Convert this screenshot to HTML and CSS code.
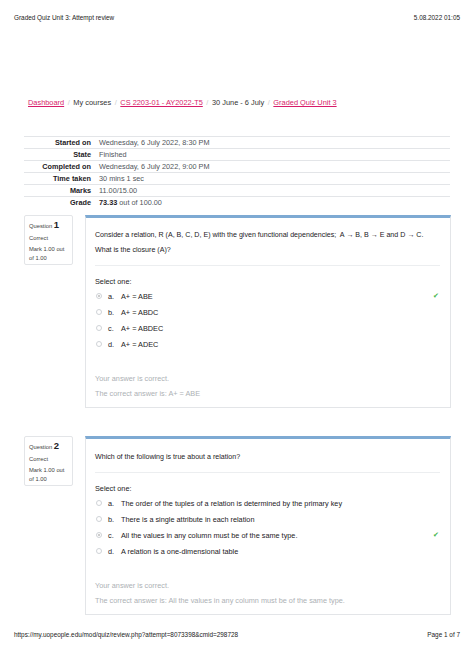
FILE: index.html
```html
<!DOCTYPE html>
<html lang="en">
<head>
    <meta charset="UTF-8">
    <meta name="viewport" content="width=device-width, initial-scale=1.0">
    <title>Graded Quiz Unit 3: Attempt review</title>
    <link rel="stylesheet" href="styles.css">
</head>
<body>
    <div class="print-head">
        <span>Graded Quiz Unit 3: Attempt review</span>
        <span>5.08.2022 01:05</span>
    </div>

    <nav class="crumbs">
        <a href="#">Dashboard</a>
        <span class="sep">/</span>
        <span>My courses</span>
        <span class="sep">/</span>
        <a href="#">CS 2203-01 - AY2022-T5</a>
        <span class="sep">/</span>
        <span>30 June - 6 July</span>
        <span class="sep">/</span>
        <a href="#">Graded Quiz Unit 3</a>
    </nav>

    <div class="summary">
        <div class="row"><div class="k">Started on</div><div class="v">Wednesday, 6 July 2022, 8:30 PM</div></div>
        <div class="row"><div class="k">State</div><div class="v">Finished</div></div>
        <div class="row"><div class="k">Completed on</div><div class="v">Wednesday, 6 July 2022, 9:00 PM</div></div>
        <div class="row"><div class="k">Time taken</div><div class="v">30 mins 1 sec</div></div>
        <div class="row"><div class="k">Marks</div><div class="v">11.00/15.00</div></div>
        <div class="row"><div class="k">Grade</div><div class="v"><b>73.33</b> out of 100.00</div></div>
    </div>

    <!-- question 1 -->
    <div class="que q1">
        <div class="info">
            <div class="qno">Question <b>1</b></div>
            <div class="state">Correct</div>
            <div class="grade">Mark 1.00 out of 1.00</div>
        </div>
        <div class="content">
            <div class="qtext">
                <p>Consider a relation, R (A, B, C, D, E) with the given functional dependencies;&nbsp; A → B, B → E and D → C.</p>
                <p>What is the closure (A)?</p>
            </div>
            <div class="ablock">
                <div class="prompt">Select one:</div>
                <div class="opt"><span class="radio on"></span><span class="let">a.</span><span class="txt">A+ = ABE</span><span class="tick">✔</span></div>
                <div class="opt"><span class="radio"></span><span class="let">b.</span><span class="txt">A+ = ABDC</span></div>
                <div class="opt"><span class="radio"></span><span class="let">c.</span><span class="txt">A+ = ABDEC</span></div>
                <div class="opt"><span class="radio"></span><span class="let">d.</span><span class="txt">A+ = ADEC</span></div>
            </div>
            <div class="outcome">
                <div>Your answer is correct.</div>
                <div>The correct answer is: A+ = ABE</div>
            </div>
        </div>
    </div>

    <!-- question 2 -->
    <div class="que q2">
        <div class="info">
            <div class="qno">Question <b>2</b></div>
            <div class="state">Correct</div>
            <div class="grade">Mark 1.00 out of 1.00</div>
        </div>
        <div class="content">
            <div class="qtext">
                <p>Which of the following is true about a relation?</p>
            </div>
            <div class="ablock">
                <div class="prompt">Select one:</div>
                <div class="opt"><span class="radio"></span><span class="let">a.</span><span class="txt">The order of the tuples of a relation is determined by the primary key</span></div>
                <div class="opt"><span class="radio"></span><span class="let">b.</span><span class="txt">There is a single attribute in each relation</span></div>
                <div class="opt"><span class="radio on"></span><span class="let">c.</span><span class="txt">All the values in any column must be of the same type.</span><span class="tick">✔</span></div>
                <div class="opt"><span class="radio"></span><span class="let">d.</span><span class="txt">A relation is a one-dimensional table</span></div>
            </div>
            <div class="outcome">
                <div>Your answer is correct.</div>
                <div>The correct answer is: All the values in any column must be of the same type.</div>
            </div>
        </div>
    </div>

    <div class="print-foot">
        <span>https://my.uopeople.edu/mod/quiz/review.php?attempt=8073398&amp;cmid=298728</span>
        <span>Page 1 of 7</span>
    </div>
</body>
</html>
```

FILE: styles.css
```css
:root {
    --text: #1d2125;
    --muted: #51565b;
    --line: #e3e5e8;
    --pink: #d81b6a;
    --blue: #7eaad3;
    --green: #43b649;
}

* {
    box-sizing: border-box;
    margin: 0;
    padding: 0;
}

body {
    width: 474px;
    height: 670px;
    padding: 0 14px;
    background: #fff;
    color: var(--text);
    font-family: "Liberation Sans", Arial, sans-serif;
    font-size: 7.3px;
}

.print-head,
.print-foot {
    display: flex;
    justify-content: space-between;
    align-items: center;
    color: #222;
}

.print-head {
    height: 34px;
    font-size: 6.4px;
}

.print-foot {
    margin-top: 13px;
    height: 12px;
    font-size: 6.4px;
}

/* breadcrumb */
.crumbs {
    margin-top: 63px;
    padding-left: 14px;
    height: 12px;
    line-height: 12px;
    font-size: 7.4px;
    color: #333;
}

.crumbs a {
    color: var(--pink);
    text-decoration: underline;
}

.crumbs .sep {
    color: #ccc;
    margin: 0 1.5px;
}

/* attempt summary */
.summary {
    margin: 27px 10px 0 10px;
}

.summary .row {
    display: flex;
    align-items: center;
    height: 12px;
    border-top: 1px solid var(--line);
}

.summary .k {
    width: 67px;
    text-align: right;
    font-weight: bold;
    color: var(--text);
}

.summary .v {
    padding-left: 8px;
    color: var(--muted);
}

.summary .v b {
    color: var(--text);
}

/* question */
.que {
    display: flex;
    gap: 12px;
    margin-left: 10px;
}

.q1 {
    margin-top: 7px;
}

.q2 {
    margin-top: 28px;
}

.info {
    width: 49px;
    height: 50px;
    flex: none;
    padding: 3px 4px;
    border: 1px solid var(--line);
    border-radius: 2px;
    font-size: 5.8px;
    color: #444;
    line-height: 9px;
}

.info .qno {
    line-height: 11px;
    margin-bottom: 2px;
}

.info .qno b {
    font-size: 9.5px;
    color: var(--text);
}

.info .state {
    margin-bottom: 2px;
}

.content {
    width: 366px;
    border: 1px solid var(--line);
    border-top: 3px solid var(--blue);
    padding: 10px 10px 6px 9px;
}

.q2 .content {
    padding-top: 11px;
}

.qtext {
    font-size: 7.1px;
    line-height: 15px;
    padding-bottom: 7px;
    border-bottom: 1px solid #eceef0;
}

.ablock {
    padding-top: 10px;
}

.prompt {
    line-height: 12px;
}

.opt {
    display: flex;
    align-items: center;
    height: 16px;
    padding-left: 1px;
}

.radio {
    width: 6px;
    height: 6px;
    border: 0.7px solid #cfd3d7;
    border-radius: 50%;
    margin-right: 6px;
    position: relative;
}

.radio.on::after {
    content: "";
    position: absolute;
    left: 1.4px;
    top: 1.4px;
    width: 2px;
    height: 2px;
    border-radius: 50%;
    background: #bbb;
}

.let {
    width: 13px;
}

.txt {
    flex: 1;
}

.tick {
    color: var(--green);
    font-size: 7px;
    margin-right: 1px;
}

.outcome {
    margin-top: 19px;
    line-height: 15px;
    color: #adb1b5;
}
```
